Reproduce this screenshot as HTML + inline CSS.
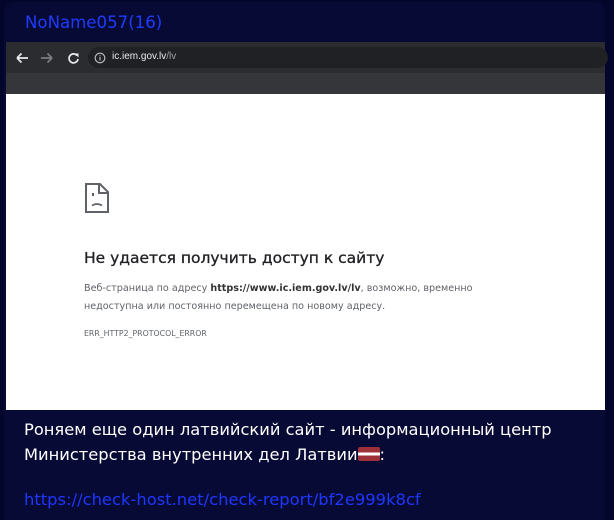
<!DOCTYPE html>
<html><head><meta charset="utf-8">
<style>
html,body{margin:0;padding:0;}
body{width:614px;height:520px;background:#03052a;position:relative;overflow:hidden;font-family:"Liberation Sans","DejaVu Sans",sans-serif;}
.card{position:absolute;left:4px;top:2px;width:601px;height:518px;background:#070a35;border-radius:10px 10px 0 0;}
.title{position:absolute;left:21px;top:11px;font-family:"DejaVu Sans",sans-serif;font-size:16.6px;color:#1f3bff;}
.shot{position:absolute;left:6px;top:42px;width:599px;height:368px;background:#fff;}
.tb{position:absolute;left:0;top:0;width:599px;height:31px;background:#2b2c2f;}
.tb2{position:absolute;left:0;top:31px;width:599px;height:21px;background:#35363a;}
.pill{position:absolute;left:82px;top:5px;width:520px;height:21px;border-radius:11px;background:#202124;}
.url{position:absolute;left:106px;top:9px;font-size:10px;color:#e8eaed;}
.url span{color:#9aa0a6;}
.h{position:absolute;left:78px;top:207px;font-family:"DejaVu Sans",sans-serif;font-size:15.5px;color:#202124;-webkit-text-stroke:0.3px #202124;}
.p{position:absolute;left:78px;top:238px;font-family:"DejaVu Sans",sans-serif;font-size:9.6px;color:#5f6368;line-height:18px;width:420px;}
.p b{color:#333;}
.err{position:absolute;left:78px;top:287px;font-family:"DejaVu Sans",sans-serif;font-size:7.8px;color:#5f6368;}
.cap{position:absolute;left:24px;top:417px;font-family:"DejaVu Sans",sans-serif;font-size:16.3px;color:#fff;line-height:25px;}
.flag{display:inline-block;width:22px;height:14px;vertical-align:-1px;background:linear-gradient(#9e3039 40%,#fff 40%,#fff 60%,#9e3039 60%);border-radius:2px;}
.link{position:absolute;left:24px;top:490px;font-family:"DejaVu Sans",sans-serif;font-size:16.35px;color:#1f36ff;}
</style></head><body>
<div class="card">
<div class="title">NoName057(16)</div>
</div>
<div class="shot">
<div class="tb"></div>
<div class="tb2"></div>
<svg style="position:absolute;left:8px;top:8px" width="70" height="16" viewBox="0 0 70 16">
<path d="M3 8h11M3 8l4.5-4.5M3 8l4.5 4.5" stroke="#e8eaed" stroke-width="1.7" fill="none"/>
<path d="M38 8H27M38 8l-4.5-4.5M38 8l-4.5 4.5" stroke="#7a7d82" stroke-width="1.7" fill="none"/>
<path d="M63 5.5A4.5 4.5 0 1 0 64 9" stroke="#e8eaed" stroke-width="1.7" fill="none"/>
<path d="M60.5 3.5h4v4z" fill="#e8eaed"/>
</svg>
<div class="pill"></div>
<svg style="position:absolute;left:88px;top:10px" width="12" height="12" viewBox="0 0 12 12"><circle cx="6" cy="6" r="4.8" stroke="#bdc1c6" stroke-width="1.1" fill="none"/><path d="M6 5v3.5M6 3.3v.9" stroke="#bdc1c6" stroke-width="1.1"/></svg>
<div class="url">ic.iem.gov.lv<span>/lv</span></div>
<svg style="position:absolute;left:78px;top:140px" width="26" height="32" viewBox="0 0 26 32">
<path d="M2 2h14l8 8v20H2z" fill="none" stroke="#5f6368" stroke-width="2"/>
<path d="M15 2v9h9" fill="none" stroke="#5f6368" stroke-width="2"/>
<rect x="8" y="11" width="2" height="3" fill="#5f6368"/>
<path d="M8 23.5q5-3 10 0" stroke="#5f6368" stroke-width="1.8" fill="none"/>
</svg>
<div class="h">Не удается получить доступ к сайту</div>
<div class="p">Веб-страница по адресу <b>https://www.ic.iem.gov.lv/lv</b>, возможно, временно недоступна или постоянно перемещена по новому адресу.</div>
<div class="err">ERR_HTTP2_PROTOCOL_ERROR</div>
</div>
<div class="cap">Роняем еще один латвийский сайт - информационный центр<br>Министерства внутренних дел Латвии<span class="flag"></span>:</div>
<div class="link">https://check-host.net/check-report/bf2e999k8cf</div>
</body></html>
